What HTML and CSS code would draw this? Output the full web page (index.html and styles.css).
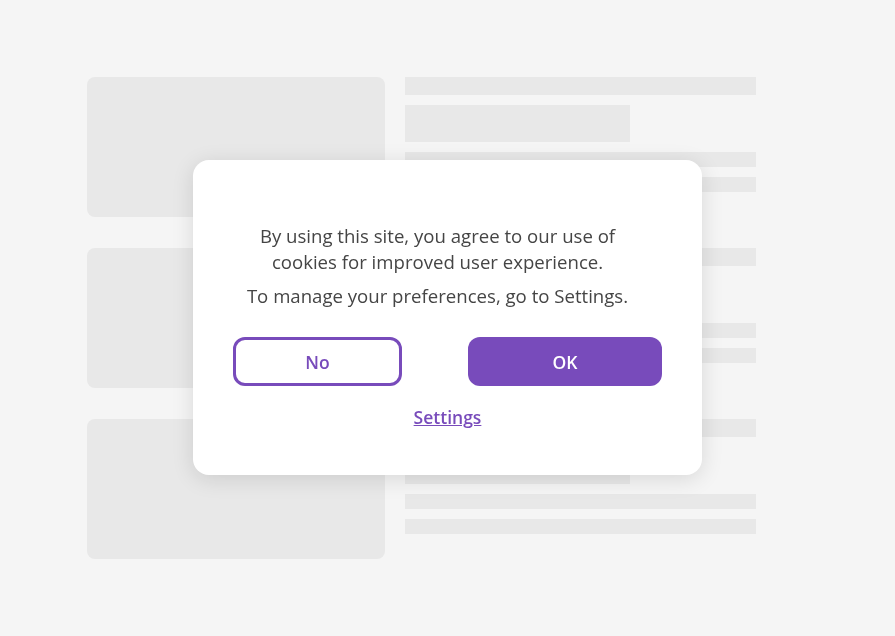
FILE: index.html
```html
<!DOCTYPE html>
<html lang="en">
  <head>
    <meta charset="UTF-8" />
    <meta name="viewport" content="width=device-width, initial-scale=1.0" />
    <title>Cookie consent</title>
    <link rel="stylesheet" href="styles.css">
  </head>
  <body>
    <div class="page">
      <div class="col-left">
        <div class="card"></div>
        <div class="card"></div>
        <div class="card"></div>
      </div>
      <div class="col-right">
        <div class="group">
          <div class="bar bar-title"></div>
          <div class="bar bar-block"></div>
          <div class="bar bar-line"></div>
          <div class="bar bar-line"></div>
        </div>
        <div class="group">
          <div class="bar bar-title"></div>
          <div class="bar bar-block"></div>
          <div class="bar bar-line"></div>
          <div class="bar bar-line"></div>
        </div>
        <div class="group">
          <div class="bar bar-title"></div>
          <div class="bar bar-block"></div>
          <div class="bar bar-line"></div>
          <div class="bar bar-line"></div>
        </div>
      </div>
    </div>

    <div class="overlay">
      <div class="modal">
        <div class="message">
          <p>By using this site, you agree to our use of cookies for improved user experience.</p>
          <p>To manage your preferences, go to Settings.</p>
        </div>
        <div class="actions">
          <button class="btn btn-outline">No</button>
          <button class="btn btn-solid">OK</button>
        </div>
        <a href="#" class="settings-link">Settings</a>
      </div>
    </div>
  </body>
</html>
```

FILE: styles.css
```css
body {
  margin: 0;
  background: #f5f5f5;
  font-family: "Open Sans", Arial, sans-serif;
  color: #454545;
}
.page {
  display: flex;
  gap: 20px;
  padding: 77px 0 0 87px;
}
.col-left {
  display: flex;
  flex-direction: column;
  gap: 31px;
  width: 298px;
}
.card {
  height: 140px;
  background: #e8e8e8;
  border-radius: 8px;
}
.col-right {
  display: flex;
  flex-direction: column;
  gap: 56px;
  width: 351px;
}
.group {
  display: flex;
  flex-direction: column;
  gap: 10px;
}
.bar {
  background: #e8e8e8;
}
.bar-title {
  height: 18px;
}
.bar-block {
  height: 37px;
  width: 225px;
}
.bar-line {
  height: 15px;
}
.overlay {
  position: fixed;
  inset: 0 0 1px 0;
  display: flex;
  align-items: center;
  justify-content: center;
}
.modal {
  width: 509px;
  box-sizing: border-box;
  padding: 63px 40px 46px;
  background: #fff;
  border-radius: 16px;
  box-shadow: 0 4px 22px rgba(0, 0, 0, 0.12);
  display: flex;
  flex-direction: column;
  align-items: center;
}
.message {
  width: 410px;
  padding-right: 20px;
  text-align: center;
  font-size: 18.6px;
  line-height: 26px;
}
.message p {
  margin: 0;
}
.message p + p {
  margin-top: 8px;
}
.actions {
  display: flex;
  justify-content: space-between;
  width: 100%;
  margin-top: 28px;
}
.btn {
  height: 49px;
  box-sizing: border-box;
  border-radius: 12px;
  font-family: "Open Sans", Arial, sans-serif;
  font-size: 17.5px;
  font-weight: 600;
  cursor: pointer;
}
.btn-outline {
  width: 169px;
  background: #fff;
  color: #784bbb;
  border: 3px solid #784bbb;
}
.btn-solid {
  width: 194px;
  background: #784bbb;
  color: #fff;
  border: none;
}
.settings-link {
  margin-top: 19px;
  font-size: 17.5px;
  line-height: 24px;
  font-weight: 600;
  color: #784bbb;
  text-decoration: underline;
}
```
